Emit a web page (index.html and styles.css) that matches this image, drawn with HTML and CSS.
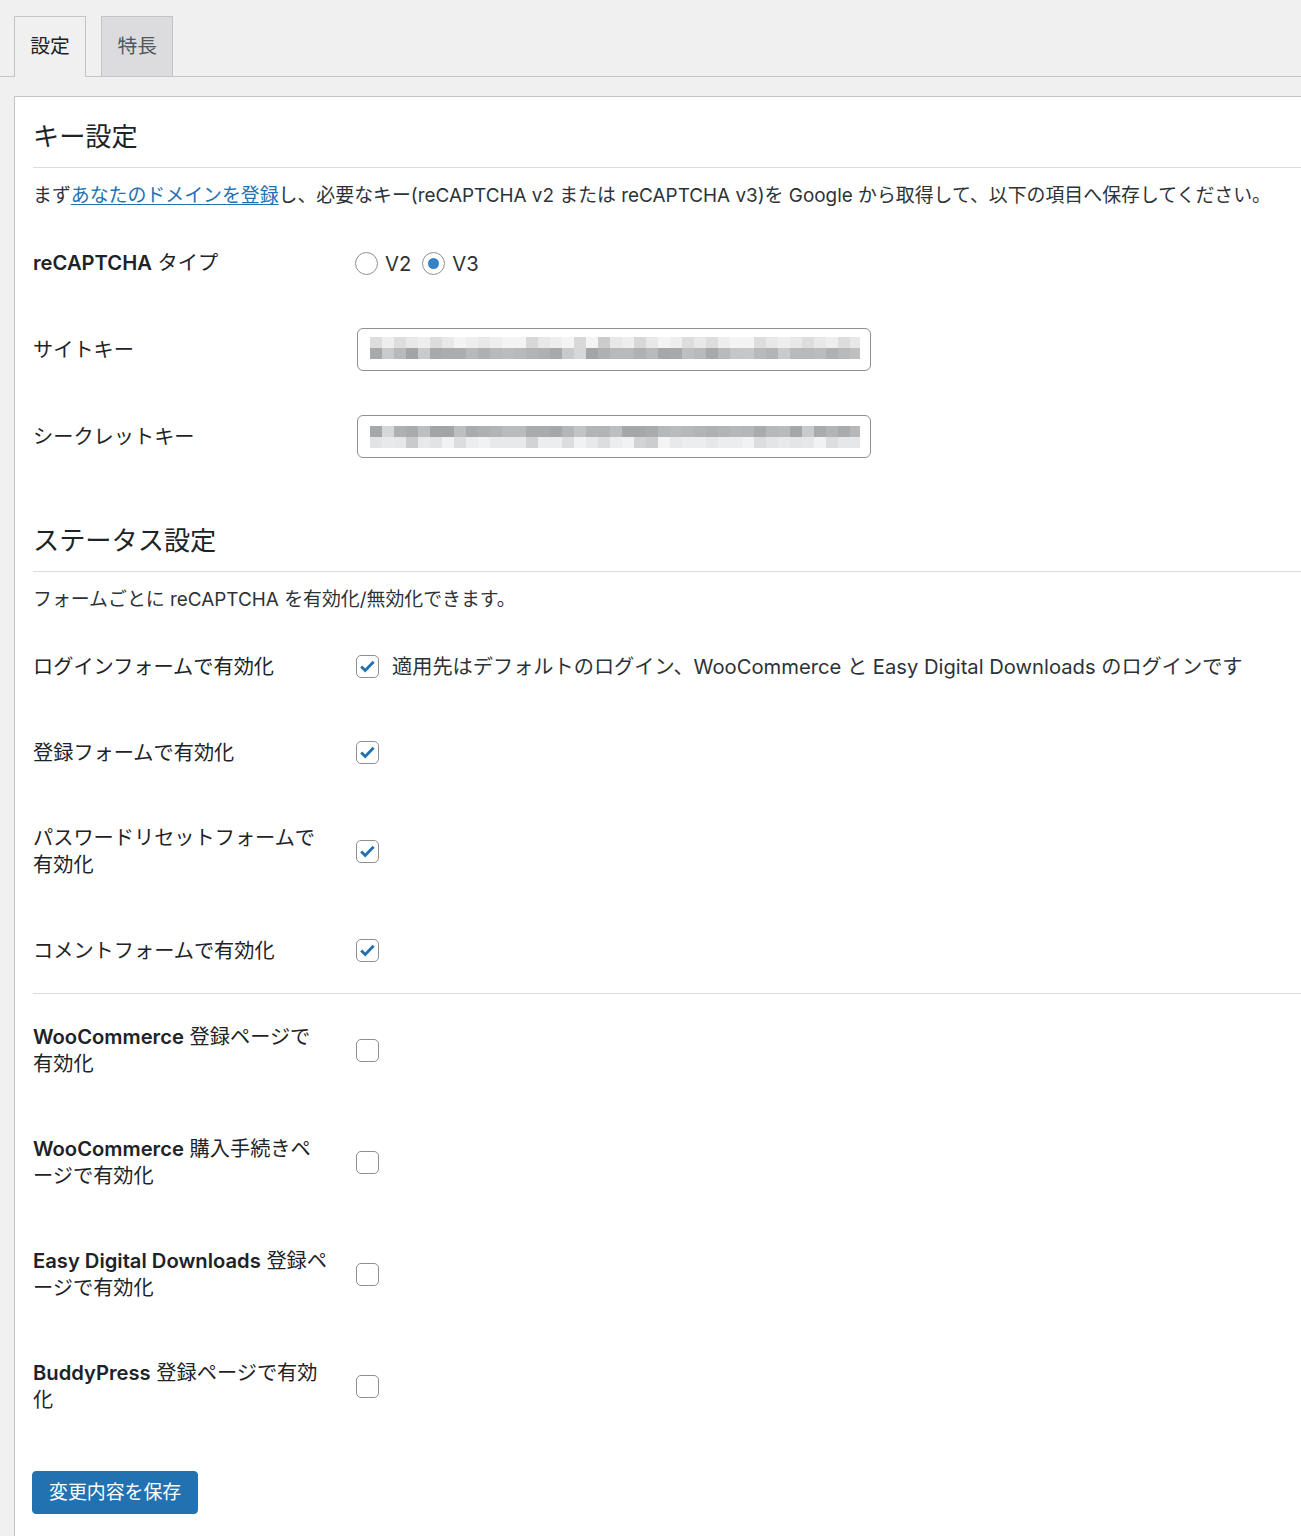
FILE: index.html
```html
<!DOCTYPE html>
<html lang="ja">
<head>
<meta charset="utf-8">
<title>reCAPTCHA 設定</title>
<link rel="stylesheet" href="styles.css">
</head>
<body>
<nav class="tabs">
  <a class="tab active">設定</a>
  <a class="tab">特長</a>
</nav>
<main class="panel">
  <h2 class="section-title">キー設定</h2>
  <p class="intro">まず<a class="link">あなたのドメインを登録</a>し、必要なキー(reCAPTCHA v2 または reCAPTCHA v3)を Google から取得して、以下の項目へ保存してください。</p>
  <div class="form-table">
    <div class="row">
      <div class="label"><span class="lat">reCAPTCHA</span> タイプ</div>
      <div class="field radios">
        <label class="radio-opt"><span class="radio"></span>V2</label>
        <label class="radio-opt"><span class="radio checked"></span>V3</label>
      </div>
    </div>
    <div class="row key-row">
      <div class="label">サイトキー</div>
      <div class="field"><div class="text-input"><span class="mosaic site"></span></div></div>
    </div>
    <div class="row">
      <div class="label">シークレットキー</div>
      <div class="field"><div class="text-input"><span class="mosaic secret"></span></div></div>
    </div>
  </div>

  <h2 class="section-title second">ステータス設定</h2>
  <p class="intro">フォームごとに reCAPTCHA を有効化/無効化できます。</p>
  <div class="form-table">
    <div class="row">
      <div class="label">ログインフォームで有効化</div>
      <div class="field with-text">
        <span class="check"><svg viewBox="0 0 23 23" width="21" height="21"><path d="M4.6 11.4 L9 15.8 L18.2 6.2" fill="none" stroke="#2271b1" stroke-width="3.2"/></svg></span>
        <span>適用先はデフォルトのログイン、WooCommerce と Easy Digital Downloads のログインです</span>
      </div>
    </div>
    <div class="row">
      <div class="label">登録フォームで有効化</div>
      <div class="field"><span class="check"><svg viewBox="0 0 23 23" width="21" height="21"><path d="M4.6 11.4 L9 15.8 L18.2 6.2" fill="none" stroke="#2271b1" stroke-width="3.2"/></svg></span></div>
    </div>
    <div class="row tall">
      <div class="label">パスワードリセットフォームで有効化</div>
      <div class="field"><span class="check"><svg viewBox="0 0 23 23" width="21" height="21"><path d="M4.6 11.4 L9 15.8 L18.2 6.2" fill="none" stroke="#2271b1" stroke-width="3.2"/></svg></span></div>
    </div>
    <div class="row">
      <div class="label">コメントフォームで有効化</div>
      <div class="field"><span class="check"><svg viewBox="0 0 23 23" width="21" height="21"><path d="M4.6 11.4 L9 15.8 L18.2 6.2" fill="none" stroke="#2271b1" stroke-width="3.2"/></svg></span></div>
    </div>
  </div>
  <div class="form-table divided">
    <div class="row tall">
      <div class="label"><span class="lat">WooCommerce</span> 登録ページで有効化</div>
      <div class="field"><span class="check"></span></div>
    </div>
    <div class="row tall">
      <div class="label"><span class="lat">WooCommerce</span> 購入手続きページで有効化</div>
      <div class="field"><span class="check"></span></div>
    </div>
    <div class="row tall">
      <div class="label"><span class="lat">Easy Digital Downloads</span> 登録ページで有効化</div>
      <div class="field"><span class="check"></span></div>
    </div>
    <div class="row tall">
      <div class="label"><span class="lat">BuddyPress</span> 登録ページで有効化</div>
      <div class="field"><span class="check"></span></div>
    </div>
  </div>
  <div class="submit">
    <button class="button-primary" type="button">変更内容を保存</button>
  </div>
</main>
</body>
</html>
```
FILE: styles.css
```css
* { box-sizing: border-box; }
html, body { margin: 0; }
body {
  background: #f0f0f1;
  font-family: Inter, "Noto Sans CJK JP", sans-serif;
  font-size: 18.9px;
  line-height: 27px;
  color: #3c434a;
  overflow-x: hidden;
  min-height: 1536px;
}

/* Tabs */
.tabs {
  display: flex;
  align-items: flex-start;
  gap: 15px;
  height: 77px;
  padding: 16px 0 0 14px;
  border-bottom: 1px solid #c3c4c7;
}
.tab {
  display: flex;
  align-items: center;
  height: 60px;
  padding: 0 15.3px;
  border: 1px solid #c3c4c7;
  border-bottom: none;
  background: #dcdcde;
  color: #50575e;
  font-size: 19.8px;
  line-height: 27px;
  text-decoration: none;
}
.tab.active {
  height: 61px;
  background: #f0f0f1;
  color: #1d2327;
  padding-bottom: 1px;
}

/* Panel */
.panel {
  margin: 19px 0 0 14px;
  padding: 23px 0 40px 18px;
  background: #fff;
  border-top: 1px solid #c3c4c7;
  border-left: 1px solid #c3c4c7;
  min-height: 1440px;
}
.section-title {
  margin: 0;
  padding-bottom: 13px;
  border-bottom: 1px solid #dcdcde;
  font-size: 26.2px;
  line-height: 34px;
  font-weight: 400;
  color: #1d2327;
}
.section-title.second { margin-top: 45px; }
.intro {
  margin: 14px 0 10px;
  white-space: nowrap;
  color: #2c3338;
}
.link {
  color: #2271b1;
  text-decoration: underline;
  text-underline-offset: 2px;
}

/* Form rows */
.row {
  display: flex;
  align-items: center;
  min-height: 86px;
  font-size: 20.2px;
}
.row.key-row { min-height: 88px; }
.row.tall { min-height: 112px; }
.label {
  flex: none;
  width: 322px;
  padding-right: 28px;
  color: #1d2327;
}
.lat { font-weight: 600; }
.field {
  display: flex;
  align-items: center;
  color: #2c3338;
}
.divided { border-top: 1px solid #dcdcde; }

/* Radios */
.radios { gap: 11px; }
.radio-opt {
  display: inline-flex;
  align-items: center;
  gap: 7px;
  margin-top: 2px;
}
.radio {
  display: flex;
  align-items: center;
  justify-content: center;
  width: 23px;
  height: 23px;
  border: 1px solid #8c8f94;
  border-radius: 50%;
  background: #fff;
}
.radio.checked::before {
  content: "";
  width: 11px;
  height: 11px;
  border-radius: 50%;
  background: #3582c4;
}

/* Checkboxes */
.check {
  display: flex;
  align-items: center;
  justify-content: center;
  flex: none;
  width: 23px;
  height: 23px;
  margin-left: 1px;
  border: 1px solid #8c8f94;
  border-radius: 5px;
  background: #fff;
}
.with-text { gap: 13px; }

/* Text inputs with blurred values */
.text-input {
  display: flex;
  align-items: center;
  width: 514px;
  height: 43px;
  margin-left: 2px;
  padding-left: 12px;
  border: 1px solid #8c8f94;
  border-radius: 6px;
  background: #fff;
}
.mosaic {
  display: block;
  width: 490px;
  height: 22px;
  filter: blur(0.4px);
}
.mosaic.site {
  margin-top: -3px;
  background:
    linear-gradient(90deg,#ddd 0 12px,#eee 12px 24px,#ddd 24px 36px,#e8e8e8 36px 48px,#eee 48px 60px,#ddd 60px 72px,#e8e8e8 72px 84px,#f4f4f4 84px 96px,#eee 96px 108px,#e8e8e8 108px 120px,#eee 120px 132px,#f4f4f4 132px 144px,#f4f4f4 144px 156px,#d8d8d8 156px 168px,#e8e8e8 168px 180px,#eee 180px 192px,#f4f4f4 192px 204px,#d8d8d8 204px 216px,#f4f4f4 216px 228px,#ccc 228px 240px,#e8e8e8 240px 252px,#eee 252px 264px,#d8d8d8 264px 276px,#e8e8e8 276px 288px,#f4f4f4 288px 300px,#eee 300px 312px,#ddd 312px 324px,#e8e8e8 324px 336px,#ddd 336px 348px,#eee 348px 360px,#f4f4f4 360px 372px,#f4f4f4 372px 384px,#ddd 384px 396px,#e8e8e8 396px 408px,#eee 408px 420px,#e8e8e8 420px 432px,#ddd 432px 444px,#e8e8e8 444px 456px,#eee 456px 468px,#ddd 468px 480px,#e8e8e8 480px 492px) top left / 492px 11px no-repeat,
    linear-gradient(90deg,#a7a9ab 0 12px,#c9cacc 12px 24px,#b7b9bb 24px 36px,#a2a4a6 36px 48px,#c9cacc 48px 60px,#a7a9ab 60px 72px,#aaacae 72px 84px,#abadaf 84px 96px,#b7b9bb 96px 108px,#aeb0b2 108px 120px,#b7b9bb 120px 132px,#babcbe 132px 144px,#b7b9bb 144px 156px,#b2b4b6 156px 168px,#aeb0b2 168px 180px,#a7a9ab 180px 192px,#c9cacc 192px 204px,#d6d7d8 204px 216px,#a2a4a6 216px 228px,#aeb0b2 228px 240px,#b7b9bb 240px 252px,#b7b9bb 252px 264px,#aeb0b2 264px 276px,#b7b9bb 276px 288px,#a5a7a9 288px 300px,#a7a9ab 300px 312px,#bcbec0 312px 324px,#b7b9bb 324px 336px,#a7a9ab 336px 348px,#b7b9bb 348px 360px,#c4c6c8 360px 372px,#c6c7c9 372px 384px,#b7b9bb 384px 396px,#b2b4b6 396px 408px,#c9cacc 408px 420px,#b7b9bb 420px 432px,#b7b9bb 432px 444px,#babcbe 444px 456px,#aeb0b2 456px 468px,#b7b9bb 468px 480px,#bdbfc1 480px 492px) bottom left / 492px 11px no-repeat;
}
.mosaic.secret {
  margin-top: 1px;
  background:
    linear-gradient(90deg,#a5a7a9 0 12px,#d6d7d8 12px 24px,#aeb0b2 24px 36px,#a9abad 36px 48px,#bcbec0 48px 60px,#a2a4a6 60px 72px,#a2a4a6 72px 84px,#bcbec0 84px 96px,#a9abad 96px 108px,#aeb0b2 108px 120px,#b2b4b6 120px 132px,#b9bbbd 132px 144px,#b9bbbd 144px 156px,#a9abad 156px 168px,#a9abad 168px 180px,#a5a7a9 180px 192px,#b4b6b8 192px 204px,#c2c4c6 204px 216px,#b2b4b6 216px 228px,#b2b4b6 228px 240px,#bcbec0 240px 252px,#a5a7a9 252px 264px,#a5a7a9 264px 276px,#a9abad 276px 288px,#b6b8ba 288px 300px,#b9bbbd 300px 312px,#b6b8ba 312px 324px,#b2b4b6 324px 336px,#aeb0b2 336px 348px,#b2b4b6 348px 360px,#b6b8ba 360px 372px,#b4b6b8 372px 384px,#a9abad 384px 396px,#b6b8ba 396px 408px,#b8babc 408px 420px,#a5a7a9 420px 432px,#c9cacc 432px 444px,#a9abad 444px 456px,#b2b4b6 456px 468px,#a9abad 468px 480px,#b6b8ba 480px 492px) top left / 492px 11px no-repeat,
    linear-gradient(90deg,#e2e3e4 0 12px,#e8e9ea 12px 24px,#e6e7e8 24px 36px,#c9cacc 36px 48px,#e8e9ea 48px 60px,#e2e3e4 60px 72px,#f2f2f3 72px 84px,#dcddde 84px 96px,#ecedee 96px 108px,#f2f2f3 108px 120px,#e8e9ea 120px 132px,#e8e9ea 132px 144px,#e8e9ea 144px 156px,#d2d3d4 156px 168px,#ecedee 168px 180px,#ecedee 180px 192px,#dcddde 192px 204px,#f2f2f3 204px 216px,#e8e9ea 216px 228px,#dcddde 228px 240px,#ecedee 240px 252px,#f2f2f3 252px 264px,#d2d3d4 264px 276px,#cccdce 276px 288px,#f4f4f5 288px 300px,#e8e9ea 300px 312px,#ecedee 312px 324px,#ecedee 324px 336px,#e6e7e8 336px 348px,#ecedee 348px 360px,#ecedee 360px 372px,#f2f2f3 372px 384px,#dcddde 384px 396px,#e4e5e6 396px 408px,#e8e9ea 408px 420px,#e4e5e6 420px 432px,#e6e7e8 432px 444px,#f2f2f3 444px 456px,#dcddde 456px 468px,#e6e7e8 468px 480px,#e6e7e8 480px 492px) bottom left / 492px 11px no-repeat;
}

/* Submit */
.submit { margin-top: 29px; }
.button-primary {
  height: 43px;
  margin-left: -1px;
  padding: 0 16px;
  border: 1px solid #2271b1;
  border-radius: 4px;
  background: #2271b1;
  color: #fff;
  font-family: inherit;
  font-size: 18.9px;
  line-height: 41px;
  cursor: pointer;
}
```
